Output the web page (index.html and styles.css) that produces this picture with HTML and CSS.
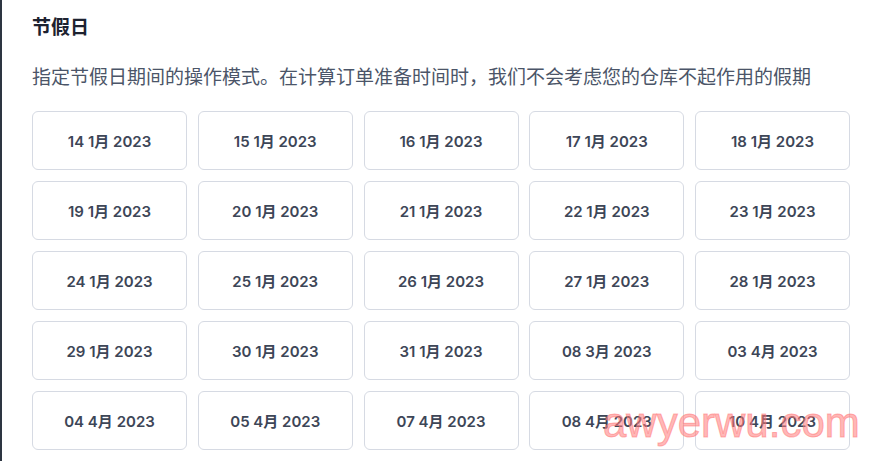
FILE: index.html
```html
<!DOCTYPE html>
<html lang="zh-CN">
<head>
    <meta charset="UTF-8">
    <meta name="viewport" content="width=device-width, initial-scale=1.0">
    <title>节假日</title>
    <link rel="stylesheet" href="styles.css">
</head>
<body>

    <section class="holidays">
        <h2>节假日</h2>
        <p class="desc">指定节假日期间的操作模式。在计算订单准备时间时，我们不会考虑您的仓库不起作用的假期</p>

        <div class="date-grid">
            <div class="date-card">14 1月 2023</div>
            <div class="date-card">15 1月 2023</div>
            <div class="date-card">16 1月 2023</div>
            <div class="date-card">17 1月 2023</div>
            <div class="date-card">18 1月 2023</div>
            <div class="date-card">19 1月 2023</div>
            <div class="date-card">20 1月 2023</div>
            <div class="date-card">21 1月 2023</div>
            <div class="date-card">22 1月 2023</div>
            <div class="date-card">23 1月 2023</div>
            <div class="date-card">24 1月 2023</div>
            <div class="date-card">25 1月 2023</div>
            <div class="date-card">26 1月 2023</div>
            <div class="date-card">27 1月 2023</div>
            <div class="date-card">28 1月 2023</div>
            <div class="date-card">29 1月 2023</div>
            <div class="date-card">30 1月 2023</div>
            <div class="date-card">31 1月 2023</div>
            <div class="date-card">08 3月 2023</div>
            <div class="date-card">03 4月 2023</div>
            <div class="date-card">04 4月 2023</div>
            <div class="date-card">05 4月 2023</div>
            <div class="date-card">07 4月 2023</div>
            <div class="date-card">08 4月 2023</div>
            <div class="date-card">10 4月 2023</div>
        </div>
    </section>

    <div class="watermark">awyerwu.com</div>

</body>
</html>
```

FILE: styles.css
```css
body {
    font-family: 'Inter', 'Noto Sans CJK SC', sans-serif;
    margin: 0;
    padding: 0;
    background-color: #ffffff;
    color: #333;
    border-left: 2px solid #2d3541;
    min-height: 461px;
    box-sizing: border-box;
    overflow: hidden;
}
.holidays {
    padding: 15px 0 0 30px;
    width: 818px;
}
.holidays h2 {
    font-size: 19px;
    font-weight: 700;
    color: #1d2230;
    margin: 0;
    line-height: 26px;
}
.desc {
    font-size: 19px;
    color: #4b5568;
    margin: 24px 0 0 0;
    line-height: 26px;
    white-space: nowrap;
}
.date-grid {
    display: grid;
    grid-template-columns: repeat(5, 1fr);
    gap: 11px 10.75px;
    margin-top: 20px;
}
.date-card {
    height: 59px;
    border: 1px solid #d6dae3;
    border-radius: 6px;
    box-sizing: border-box;
    display: flex;
    align-items: center;
    justify-content: center;
    font-size: 15px;
    font-weight: 600;
    color: #3d4657;
}
.watermark {
    position: absolute;
    left: 603px;
    top: 398px;
    font-family: 'Liberation Sans', Arial, sans-serif;
    font-size: 42px;
    color: rgba(255, 120, 120, 0.55);
    -webkit-text-stroke: 1px rgba(255, 120, 120, 0.55);
    line-height: 50px;
}
```
